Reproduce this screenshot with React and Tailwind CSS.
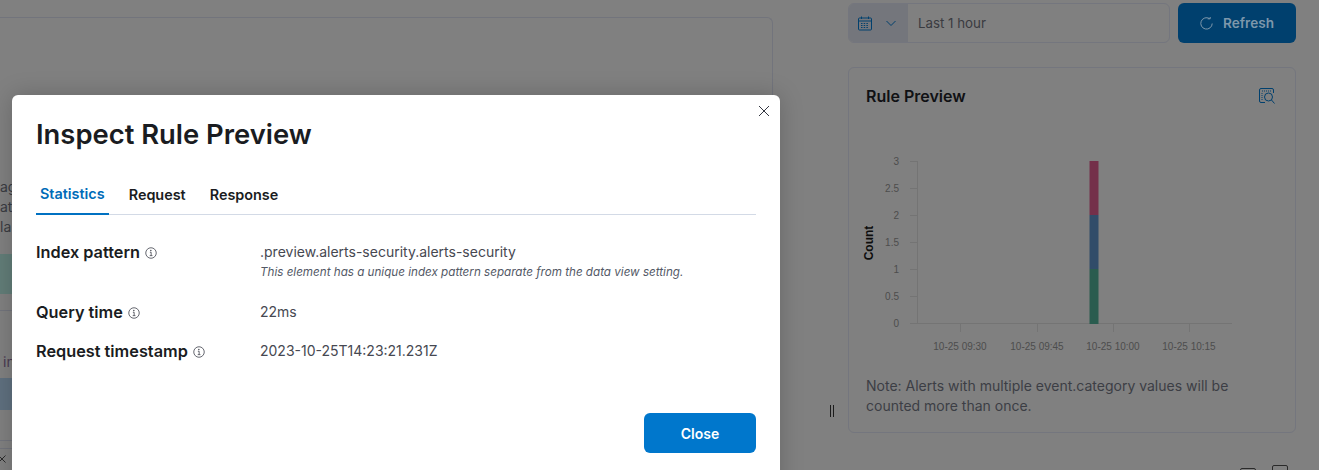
import React from "react";

const sans = "font-['Inter','Liberation_Sans',sans-serif]";

function InfoIcon() {
  return (
    <svg width="12" height="12" viewBox="0 0 16 16" fill="none" className="mt-[2px] ml-[5px] shrink-0 text-[#343741]" stroke="currentColor">
      <circle cx="8" cy="8" r="7" strokeWidth="1" />
      <path d="M6.5 7h1.7v4.3M6.3 11.5h3.6" strokeWidth="1" />
      <circle cx="7.8" cy="4.7" r="0.9" fill="currentColor" stroke="none" />
    </svg>
  );
}

function Row({ label, children, className }) {
  return (
    <div className={`flex ${className}`}>
      <div className="flex w-[224px] shrink-0 items-center self-start text-[16.3px] leading-[20px] font-semibold text-[#1a1c21]">
        {label}
        <InfoIcon />
      </div>
      <div className="min-w-0 text-[14px] leading-[20px] text-[#464851]">{children}</div>
    </div>
  );
}

function Chart() {
  const ys = [
    ["3", 161],
    ["2.5", 188],
    ["2", 215],
    ["1.5", 242],
    ["1", 269],
    ["0.5", 296],
    ["0", 323],
  ];
  const xs = [
    ["10-25 09:30", 960],
    ["10-25 09:45", 1037],
    ["10-25 10:00", 1113],
    ["10-25 10:15", 1189],
  ];
  return (
    <svg width="400" height="220" viewBox="850 140 400 220" className="ml-px block">
      {ys.map(([t, y]) => (
        <g key={t}>
          <line x1="910" x2="917" y1={y + 0.5} y2={y + 0.5} stroke="#747474" />
          <text x="899" y={y + 3.5} textAnchor="end" fontSize="10" fontFamily="Liberation Sans" fill="#4d4d4d">{t}</text>
        </g>
      ))}
      <line x1="917.5" x2="917.5" y1="161" y2="324" stroke="#747474" />
      <line x1="910" x2="1232" y1="323.5" y2="323.5" stroke="#747474" />
      {xs.map(([t, x]) => (
        <g key={t}>
          <line x1={x + 0.5} x2={x + 0.5} y1="324" y2="332" stroke="#747474" />
          <text x={x} y="350" textAnchor="middle" fontSize="10" fontFamily="Liberation Sans" fill="#4d4d4d">{t}</text>
        </g>
      ))}
      <rect x="1089.5" y="161" width="9" height="54" fill="#74304a" />
      <rect x="1089.5" y="215" width="9" height="54" fill="#314c69" />
      <rect x="1089.5" y="269" width="9" height="55" fill="#2a5c4f" />
      <text transform="translate(873 243) rotate(-90)" textAnchor="middle" fontSize="12" fontWeight="700" fontFamily="Liberation Sans" fill="#0d0d0d">Count</text>
    </svg>
  );
}

export default function App() {
  return (
    <div className={`relative flex h-[470px] w-[1319px] overflow-hidden bg-[#808080] ${sans}`}>
      {/* left column behind the modal */}
      <div className="w-[773px] shrink-0 pt-[17px]">
        <div className="h-[600px] rounded-tr-[6px] border-t border-r border-[#72747c]">
          <div className="pt-[159px] text-[14px] leading-[20px] whitespace-nowrap text-[#3a3c42]">
            <div>ag</div>
            <div>at</div>
            <div>la</div>
          </div>
          <div className="mt-[17px] h-[40px] bg-[#627d78]" />
          <div className="mt-[16px] h-px bg-[#72747c]" />
          <div className="mt-[41px] pl-[3px] text-[14px] leading-[20px] text-[#4a3a52]">in</div>
          <div className="mt-[6px] h-[32px] bg-[#5f707f]" />
          <div className="mt-[30px] h-px bg-[#72747c]" />
          <div className="mt-[7px] h-px bg-[#72747c]" />
          <svg width="8" height="8" viewBox="0 0 8 8" fill="none" stroke="#2c2c2c" className="mt-[6px] -ml-[2px]">
            <path d="M0.5 0.5l7 7M7.5 0.5l-7 7" />
          </svg>
        </div>
      </div>

      {/* splitter */}
      <div className="flex w-[75px] shrink-0 flex-col items-center pt-[405px] pl-[43px]">
        <div className="flex gap-[2px]">
          <div className="h-[12px] w-px bg-[#1c1c1c]" />
          <div className="h-[12px] w-px bg-[#1c1c1c]" />
        </div>
      </div>

      {/* right column */}
      <div className="w-[448px] shrink-0 pt-[3px]">
        <div className="flex gap-[8px]">
          <div className="flex h-[40px] w-[322px] overflow-hidden rounded-[6px] border border-[#74767e]">
            <div className="flex w-[59px] shrink-0 items-center gap-[12px] bg-[#74767c] pl-[9px] text-[#00406e]">
              <svg width="15" height="15" viewBox="0 0 15 15" fill="none" stroke="currentColor">
                <rect x="0.5" y="2" width="13" height="12" rx="1" />
                <path d="M0.5 5h13M3.5 0.5v2.5M10.5 0.5v2.5" />
                <path d="M3 7.5h8M3 9.5h8M3 11.5h8" strokeDasharray="1.5 1.2" />
              </svg>
              <svg width="12" height="12" viewBox="0 0 12 12" fill="none" stroke="currentColor">
                <path d="M1.5 4l4.5 4.5L10.5 4" />
              </svg>
            </div>
            <div className="flex items-center pl-[10px] text-[13.3px] leading-[16px] text-[#3a3b40]">Last 1 hour</div>
          </div>
          <div className="flex h-[40px] w-[118px] items-center justify-center gap-[10px] rounded-[6px] bg-[#00406e] text-[13.6px] font-semibold text-[#7d97ab]">
            <svg width="13" height="13" viewBox="0 0 13 13" fill="none" stroke="currentColor">
              <path d="M9.6 1.6A5.7 5.7 0 1 0 12.2 6.5" />
              <path d="M7.6 1.8h2.6V0" />
            </svg>
            Refresh
          </div>
        </div>

        <div className="mt-[24px] h-[366px] rounded-[6px] border border-[#74767e]">
          <div className="flex items-center justify-between pt-[18px] pr-[20px] pl-[17px]">
            <div className="text-[16px] leading-[20px] font-semibold text-[#101114]">Rule Preview</div>
            <svg width="16" height="16" viewBox="0 0 16 16" fill="none" className="text-[#00406e]" stroke="currentColor">
              <path d="M6 14.5H2a1.5 1.5 0 0 1-1.5-1.5V2A1.5 1.5 0 0 1 2 .5h11A1.5 1.5 0 0 1 14.5 2v3" />
              <path d="M3 3h10M3 5v7" strokeDasharray="1 1" />
              <circle cx="9.5" cy="9" r="4" />
              <path d="M12.5 12l3 3.5" />
            </svg>
          </div>
          <div className="mt-[34px]">
            <Chart />
          </div>
          <div className="mt-[16px] pr-[16px] pl-[17px] text-[14px] leading-[20px] text-[#3c3e45]">
            Note: Alerts with multiple event.category values will be counted more than once.
          </div>
        </div>

        <div className="mt-[32px] flex items-start justify-end gap-[16px] pr-[8px] text-[#2a2a2a]">
          <div className="mt-[3px] h-[16px] w-[16px] rounded-[2px] border border-current" />
          <div className="h-[16px] w-[16px] rounded-[2px] border border-current" />
        </div>
      </div>

      {/* modal */}
      <div className="absolute top-[95px] left-[12px] h-[420px] w-[768px] rounded-[6px] bg-white px-[24px] pt-[23px] shadow-[0_0_24px_rgba(0,0,0,0.2)]">
        <svg width="12" height="12" viewBox="0 0 12 12" fill="none" stroke="#343741" className="absolute top-[10px] right-[10px]">
          <path d="M1 1l10 10M11 1L1 11" />
        </svg>
        <h1 className="text-[27.4px] leading-[32px] font-semibold text-[#1a1c21]">Inspect Rule Preview</h1>
        <div className="mt-[25px] flex h-[40px] items-stretch border-b border-[#d3dae6] text-[14.4px] font-semibold">
          <div className="-mb-px flex items-center border-b-2 border-[#0071c2] px-[4px] text-[#006bb8]">Statistics</div>
          <div className="ml-[16px] flex items-center px-[4px] text-[#1a1c21]">Request</div>
          <div className="ml-[16px] flex items-center px-[4px] text-[#1a1c21]">Response</div>
        </div>
        <Row label="Index pattern" className="mt-[27px]">
          .preview.alerts-security.alerts-security
          <div className="mt-[2px] text-[11.65px] leading-[16px] text-[#535966] italic">
            This element has a unique index pattern separate from the data view setting.
          </div>
        </Row>
        <Row label="Query time" className="mt-[22px]">22ms</Row>
        <Row label="Request timestamp" className="mt-[19px]">2023-10-25T14:23:21.231Z</Row>
        <div className="absolute top-[318px] right-[24px] flex h-[40px] w-[112px] items-center justify-center rounded-[6px] bg-[#0077cc] text-[14px] font-semibold text-white">
          Close
        </div>
      </div>
    </div>
  );
}
